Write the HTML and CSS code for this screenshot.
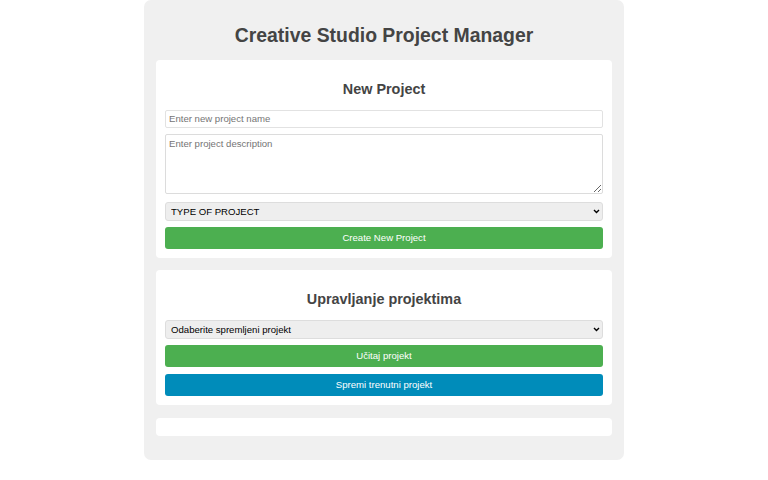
FILE: index.html
```html
<!DOCTYPE html>
<html lang="en">
<head>
<meta charset="utf-8">
<title>Creative Studio Project Manager</title>
<link rel="stylesheet" href="styles.css">
</head>
<body>
<div class="app">
  <h1 class="title">Creative Studio Project Manager</h1>
  <section class="card">
    <h2 class="card-title">New Project</h2>
    <input class="field field-input" type="text" placeholder="Enter new project name">
    <textarea class="field field-area" placeholder="Enter project description"></textarea>
    <select class="field field-select">
      <option>TYPE OF PROJECT</option>
    </select>
    <button class="btn btn-green">Create New Project</button>
  </section>
  <section class="card">
    <h2 class="card-title">Upravljanje projektima</h2>
    <select class="field field-select">
      <option>Odaberite spremljeni projekt</option>
    </select>
    <button class="btn btn-green">Učitaj projekt</button>
    <button class="btn btn-blue">Spremi trenutni projekt</button>
  </section>
  <section class="card card-empty"></section>
</div>
</body>
</html>
```
FILE: styles.css
```css
* { box-sizing: border-box; }
html, body { margin: 0; padding: 0; background: #fff; }
body {
  font-family: "Liberation Sans", Arial, sans-serif;
  color: #444;
}
.app {
  width: 480px;
  margin: 0 auto;
  background: #f0f0f0;
  padding: 12px;
  border-radius: 7px;
  display: flex;
  flex-direction: column;
}
.title {
  margin: 12px 0 14px;
  font-size: 19.4px;
  line-height: 22px;
  font-weight: bold;
  text-align: center;
  color: #444;
}
.card {
  background: #fff;
  border-radius: 4px;
  padding: 9px;
  margin-bottom: 12px;
  display: flex;
  flex-direction: column;
}
.card-empty { height: 17px; margin-top: 1px; }
.card-title {
  margin: 12px 0 12.5px;
  font-size: 14.4px;
  line-height: 16.5px;
  font-weight: bold;
  text-align: center;
  color: #444;
}
.field {
  width: 100%;
  font-family: "Liberation Sans", Arial, sans-serif;
  font-size: 9.6px;
  margin: 0;
}
.field-input {
  height: 17.6px;
  border: 1px solid #e2e2e2;
  border-radius: 2px;
  padding: 0 3px;
  color: #333;
  margin-bottom: 6.4px;
}
.field-area {
  height: 60px;
  border: 1px solid #dcdcdc;
  border-radius: 2px;
  padding: 3px;
  resize: vertical;
  margin-bottom: 8px;
  display: block;
}
.field::placeholder { color: #757575; }
.field-select {
  -webkit-appearance: none;
  appearance: none;
  height: 19px;
  background-color: #eeeeee;
  background-image: url("data:image/svg+xml,%3Csvg xmlns='http://www.w3.org/2000/svg' width='7' height='5' viewBox='0 0 7 5'%3E%3Cpath d='M1 1l2.5 2.5L6 1' fill='none' stroke='%23000' stroke-width='1.4'/%3E%3C/svg%3E");
  background-repeat: no-repeat;
  background-position: right 2px center;
  background-size: 7px 5px;
  border: 1px solid #dddddd;
  border-radius: 3px;
  color: #000;
  padding: 0 12px 0 5px;
  margin-bottom: 6px;
}
.btn {
  height: 22px;
  border: none;
  border-radius: 3px;
  color: #fff;
  font-family: "Liberation Sans", Arial, sans-serif;
  font-size: 9.6px;
  padding: 0;
  width: 100%;
  margin: 0 0 7px;
}
.btn:last-child { margin-bottom: 0; }
.btn-green { background: #4caf50; }
.btn-blue { background: #008cba; }
```
